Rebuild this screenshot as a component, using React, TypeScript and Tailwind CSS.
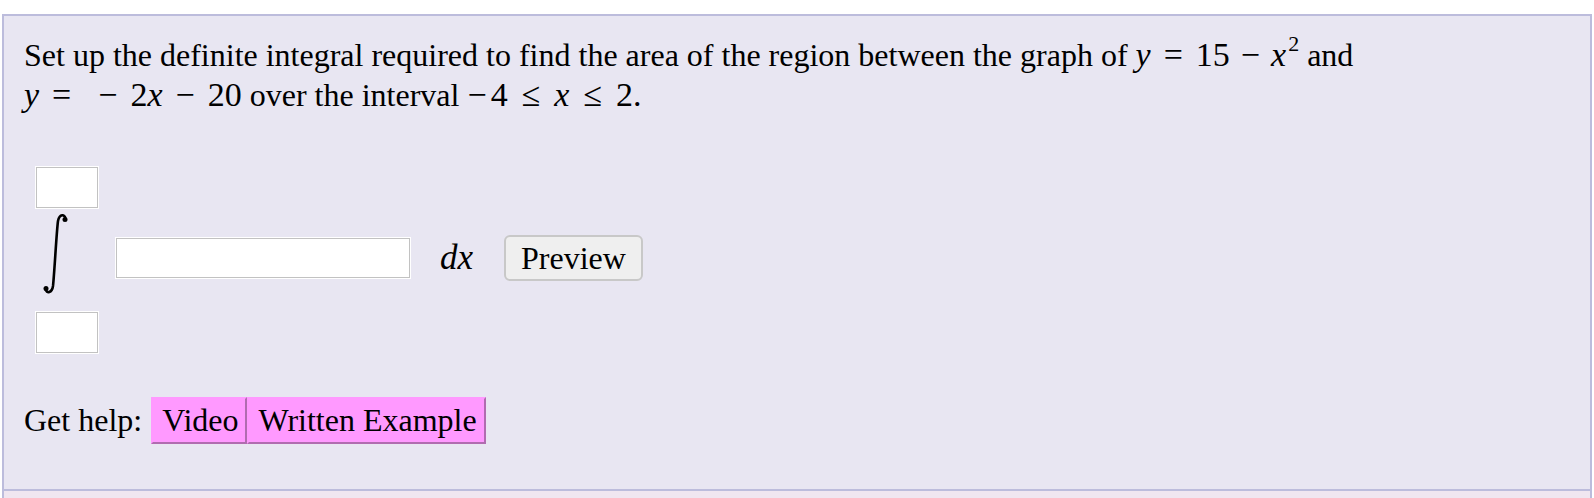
export default function App() {
  const box = "bg-white border border-[#c2c2c2] shadow-[0_0_0_1px_#ffffff]";
  const help =
    "bg-[#ff99ff] border-2 border-t-[#ff99ff] border-l-[#ff99ff] border-r-[#b06cb0] border-b-[#b06cb0] pl-[9px] pr-[7px] h-[47px] flex items-center";
  const m = "text-[34px]";
  return (
    <div className="w-[1594px] h-[498px] bg-white pt-[14px] overflow-hidden font-['Liberation_Serif','Times_New_Roman',serif] text-black">
      <div className="mx-[2px] h-[477px] border-2 border-[#bcbcdc] bg-[#e8e6f2] pl-[20px] pt-[19px]">
        <div className="text-[32px] leading-[39px]">
          <div>
            Set up the definite integral required to find the area of the region between the graph of{" "}
            <span className={`${m} italic`}>y</span>
            <span className={`${m} mx-[13px]`}>=</span>
            <span className={m}>15</span>
            <span className={`${m} mx-[11px]`}>−</span>
            <span className={`${m} italic`}>x</span>
            <sup className="text-[22px] relative top-[-15px] ml-[2px]">2</sup> and
          </div>
          <div>
            <span className={`${m} italic`}>y</span>
            <span className={`${m} mx-[13px]`}>=</span>
            <span className={`${m} ml-[14px]`}>−</span>
            <span className={`${m} ml-[13px]`}>2</span>
            <span className={`${m} italic`}>x</span>
            <span className={`${m} mx-[13px]`}>−</span>
            <span className={m}>20</span> over the interval <span className={m}>−</span>
            <span className={`${m} ml-[4px]`}>4</span>
            <span className={`${m} mx-[14px]`}>≤</span>
            <span className={`${m} italic`}>x</span>
            <span className={`${m} mx-[14px]`}>≤</span>
            <span className={m}>2</span>
            <span className={m}>.</span>
          </div>
        </div>

        <div className="mt-[52px] flex items-center ml-[12px]">
          <div className="flex flex-col">
            <div className={`${box} w-[62px] h-[41px]`} />
            <div className="h-[104px] flex items-center pl-[6px]">
              <svg width="27" height="84" viewBox="0 0 27 84" className="mb-[12px]">
                <path
                  d="M23.5 7 C23 2, 17.5 1.5, 16 9 C14.5 20, 12.5 60, 11 74 C10 81, 4.5 82, 3.5 77"
                  fill="none"
                  stroke="#000"
                  strokeWidth="2.6"
                  strokeLinecap="round"
                />
                <circle cx="23" cy="7.5" r="2.5" fill="#000" />
                <circle cx="4" cy="76.5" r="2.5" fill="#000" />
              </svg>
            </div>
            <div className={`${box} w-[62px] h-[41px]`} />
          </div>
          <div className={`${box} ml-[18px] w-[294px] h-[40px] mb-[4px]`} />
          <span className="ml-[30px] italic text-[35px] mb-[4px]">dx</span>
          <button className="ml-[31px] h-[46px] px-[15px] rounded-[6px] border-2 border-[#c8c8c8] bg-[#efefef] text-[32px] leading-none mb-[4px]">
            Preview
          </button>
        </div>

        <div className="mt-[43px] flex items-center text-[32px]">
          <span>Get help:</span>
          <span className="ml-[9px] flex">
            <span className={help}>Video</span>
            <span className={help}>Written Example</span>
          </span>
        </div>
      </div>
      <div className="mx-[2px] h-[20px] border-x-2 border-[#bcbcdc] bg-[#f0e6f0]" />
    </div>
  );
}
